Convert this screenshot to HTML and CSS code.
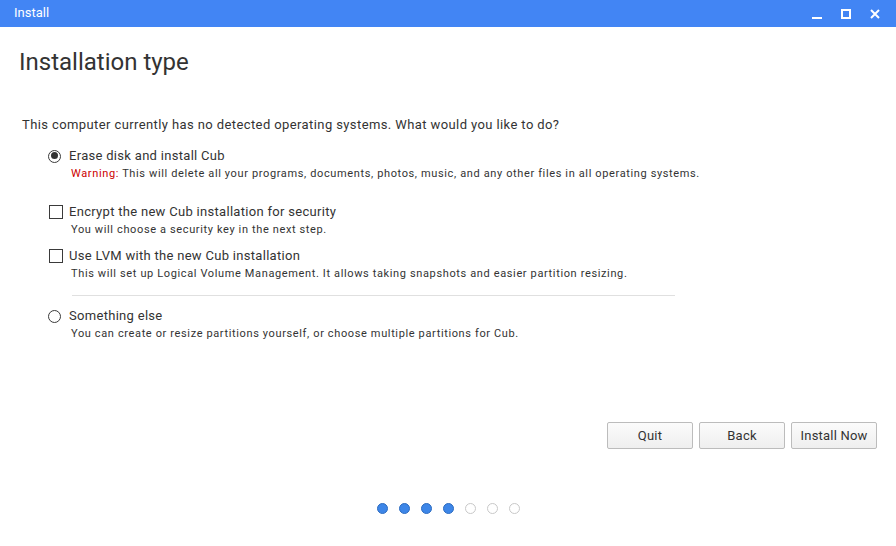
FILE: index.html
```html
<!DOCTYPE html>
<html>
<head>
  <title>Install</title>
  <link rel="stylesheet" href="styles.css">
</head>
<body>
  <div class="titlebar">
    <span class="title">Install</span>
    <div class="controls">
      <svg width="10" height="10" viewBox="0 0 10 10"><rect x="0" y="8" width="10" height="2" fill="#fff"/></svg>
      <svg width="10" height="10" viewBox="0 0 10 10"><rect x="1" y="1" width="8" height="8" fill="none" stroke="#fff" stroke-width="2"/></svg>
      <svg width="10" height="10" viewBox="0 0 10 10"><path d="M1 1 L9 9 M9 1 L1 9" stroke="#fff" stroke-width="2"/></svg>
    </div>
  </div>

  <div class="content">
    <h1>Installation type</h1>
    <p class="question">This computer currently has no detected operating systems. What would you like to do?</p>

    <div class="options">
      <div class="option first">
        <div class="label"><span class="radio checked"></span>Erase disk and install Cub</div>
        <div class="desc"><span class="warning">Warning:</span> This will delete all your programs, documents, photos, music, and any other files in all operating systems.</div>
      </div>
      <div class="option second">
        <div class="label"><span class="checkbox"></span>Encrypt the new Cub installation for security</div>
        <div class="desc">You will choose a security key in the next step.</div>
      </div>
      <div class="option">
        <div class="label"><span class="checkbox"></span>Use LVM with the new Cub installation</div>
        <div class="desc">This will set up Logical Volume Management. It allows taking snapshots and easier partition resizing.</div>
      </div>
      <div class="separator"></div>
      <div class="option">
        <div class="label"><span class="radio"></span>Something else</div>
        <div class="desc">You can create or resize partitions yourself, or choose multiple partitions for Cub.</div>
      </div>
    </div>

    <div class="buttons">
      <button class="btn">Quit</button>
      <button class="btn">Back</button>
      <button class="btn">Install Now</button>
    </div>
  </div>

  <div class="steps">
    <span class="dot done"></span>
    <span class="dot done"></span>
    <span class="dot done"></span>
    <span class="dot done"></span>
    <span class="dot"></span>
    <span class="dot"></span>
    <span class="dot"></span>
  </div>
</body>
</html>
```

FILE: styles.css
```css
body {
  margin: 0;
  font-family: Roboto, "Liberation Sans", sans-serif;
  color: #333;
  background: #fff;
}
.titlebar {
  height: 27px;
  background: #4285f4;
  color: #fff;
  display: flex;
  align-items: center;
  justify-content: space-between;
  padding: 0 16px 0 14px;
}
.title {
  font-size: 13px;
  margin-top: -2px;
}
.controls {
  display: flex;
  gap: 19px;
  margin-top: 1px;
}
.content {
  padding: 0 19px;
}
h1 {
  font-size: 24px;
  font-weight: normal;
  line-height: 29px;
  margin: 21px 0 0 0;
  color: #333;
}
.question {
  font-size: 13px;
  line-height: 16px;
  letter-spacing: 0.4px;
  margin: 40px 0 0 3px;
}
.options {
  margin: 14px 0 0 29px;
}
.option .label {
  display: flex;
  align-items: center;
  font-size: 13px;
  line-height: 18px;
  letter-spacing: 0.3px;
}
.option .desc {
  font-size: 11px;
  line-height: 18px;
  letter-spacing: 0.63px;
  margin-left: 23px;
}
.option.first {
  margin-bottom: 20px;
}
.option.second {
  margin-bottom: 8px;
}
.warning {
  color: #c00;
}
.radio {
  box-sizing: border-box;
  flex-shrink: 0;
  width: 13px;
  height: 13px;
  border: 1.5px solid #3a3a3a;
  border-radius: 50%;
  margin-right: 8px;
  position: relative;
}
.radio.checked::after {
  content: "";
  position: absolute;
  left: 1.5px;
  top: 1.5px;
  width: 7px;
  height: 7px;
  border-radius: 50%;
  background: #333;
}
.checkbox {
  box-sizing: border-box;
  flex-shrink: 0;
  width: 14px;
  height: 14px;
  border: 1px solid #3a3a3a;
  margin: 0 6px 0 1px;
}
.separator {
  width: 603px;
  height: 1px;
  background: #e0e0e0;
  margin: 12px 0 11px 24px;
}
.buttons {
  display: flex;
  justify-content: flex-end;
  gap: 6px;
  margin-top: 79px;
}
.btn {
  width: 86px;
  height: 27px;
  font-family: Roboto, "Liberation Sans", sans-serif;
  font-size: 13px;
  letter-spacing: 0.2px;
  color: #333;
  background: linear-gradient(#fbfbfb, #efefef);
  border: 1px solid #bcbcbc;
  border-radius: 2px;
  padding: 0;
}
.steps {
  display: flex;
  justify-content: center;
  gap: 11px;
  margin-top: 54px;
}
.dot {
  width: 9px;
  height: 9px;
  border-radius: 50%;
  border: 1px solid #c8c8c8;
  background: #fff;
}
.dot.done {
  background: #3d86e8;
  border-color: #2d6cc0;
}
```
